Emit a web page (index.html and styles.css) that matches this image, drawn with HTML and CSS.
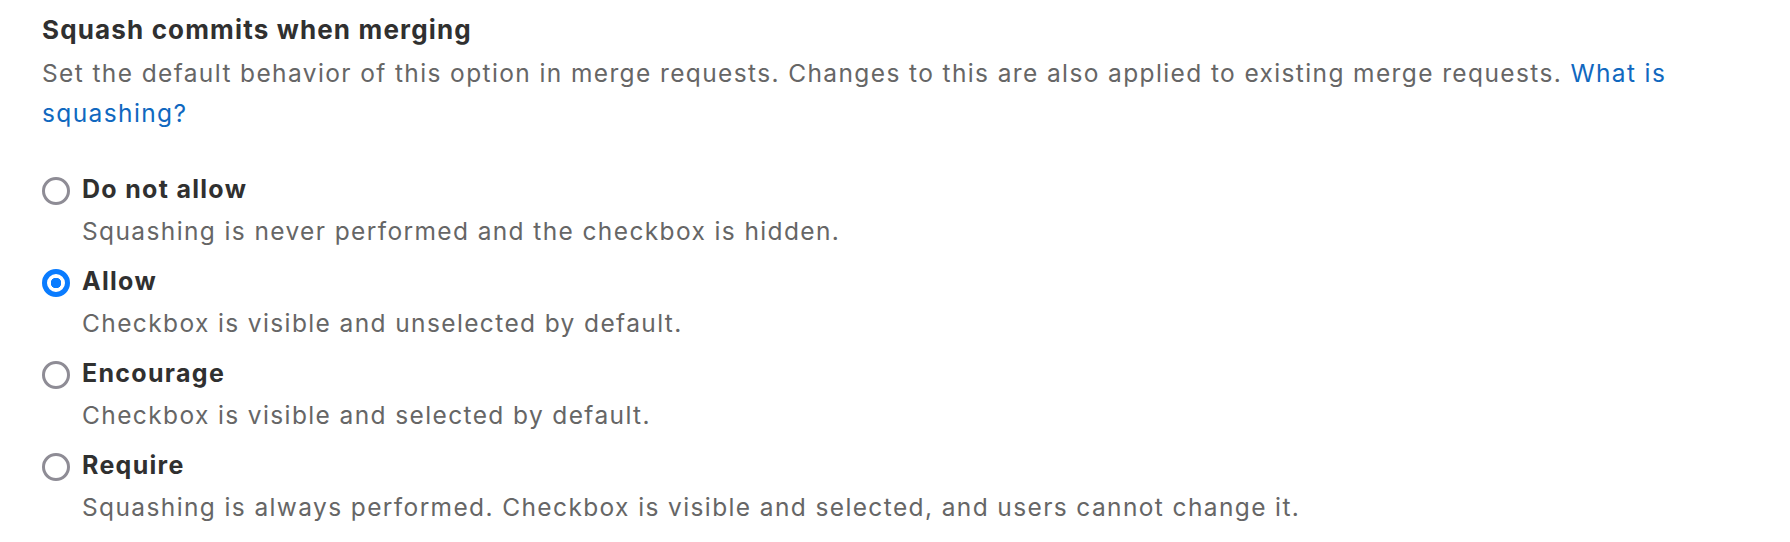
FILE: index.html
```html
<!DOCTYPE html>
<html lang="en">
<head>
<meta charset="utf-8">
<title>Squash commits when merging</title>
<link rel="stylesheet" href="styles.css">
</head>
<body>
<section class="setting">
  <h2 class="setting-title">Squash commits when merging</h2>
  <p class="setting-help">Set the default behavior of this option in merge requests. Changes to this are also applied to existing merge requests. <a class="help-link" href="#">What is squashing?</a></p>
  <div class="options">
    <label class="option">
      <span class="option-head"><input class="radio" type="radio" name="squash"><span class="option-label">Do not allow</span></span>
      <span class="option-desc">Squashing is never performed and the checkbox is hidden.</span>
    </label>
    <label class="option">
      <span class="option-head"><input class="radio" type="radio" name="squash" checked><span class="option-label">Allow</span></span>
      <span class="option-desc">Checkbox is visible and unselected by default.</span>
    </label>
    <label class="option">
      <span class="option-head"><input class="radio" type="radio" name="squash"><span class="option-label">Encourage</span></span>
      <span class="option-desc">Checkbox is visible and selected by default.</span>
    </label>
    <label class="option">
      <span class="option-head"><input class="radio" type="radio" name="squash"><span class="option-label">Require</span></span>
      <span class="option-desc">Squashing is always performed. Checkbox is visible and selected, and users cannot change it.</span>
    </label>
  </div>
</section>
</body>
</html>
```
FILE: styles.css
```css
html, body {
  margin: 0;
  padding: 0;
  background: #ffffff;
}
body {
  font-family: Inter, "Noto Sans", "Liberation Sans", sans-serif;
  color: #666666;
}
.setting {
  padding: 10px 0 0 42px;
}
.setting-title {
  margin: 0;
  font-size: 26px;
  line-height: 40px;
  font-weight: 700;
  letter-spacing: 1.15px;
  color: #303030;
}
.setting-help {
  margin: 3px 0 0;
  font-size: 24.5px;
  line-height: 40px;
  letter-spacing: 1.38px;
  color: #666666;
  max-width: 1660px;
}
.help-link {
  color: #1068bf;
  text-decoration: none;
}
.options {
  display: flex;
  flex-direction: column;
  gap: 8px;
  margin-top: 35px;
}
.option {
  display: flex;
  flex-direction: column;
}
.option-head {
  display: flex;
  align-items: center;
  gap: 12px;
  height: 42px;
}
.radio {
  appearance: none;
  -webkit-appearance: none;
  margin: 3px 0 0;
  width: 28px;
  height: 28px;
  border-radius: 50%;
  border: 3px solid #8e8c95;
  background: #ffffff;
  box-sizing: border-box;
  flex: none;
}
.radio:checked {
  border: 5px solid #0a7cff;
  background: radial-gradient(circle, #0a7cff 0 5px, #ffffff 5.5px);
}
.option-label {
  font-size: 25px;
  font-weight: 700;
  letter-spacing: 1.3px;
  color: #303030;
  line-height: 42px;
}
.option-desc {
  padding-left: 40px;
  font-size: 24.5px;
  line-height: 42px;
  letter-spacing: 1.38px;
  color: #666666;
}
```
